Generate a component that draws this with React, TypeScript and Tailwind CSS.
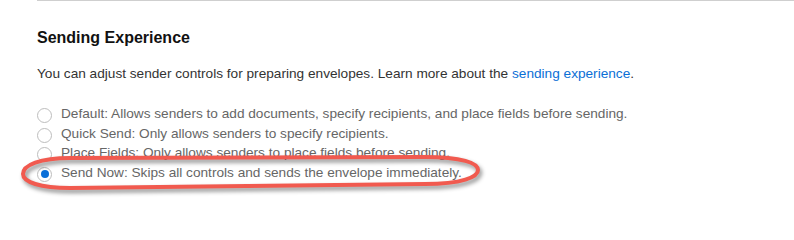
const options = [
  { id: "default", label: "Default: Allows senders to add documents, specify recipients, and place fields before sending." },
  { id: "quick", label: "Quick Send: Only allows senders to specify recipients." },
  { id: "place", label: "Place Fields: Only allows senders to place fields before sending." },
  { id: "now", label: "Send Now: Skips all controls and sends the envelope immediately." },
];

function Radio({ checked }: { checked: boolean }) {
  return (
    <span className="flex h-[15px] w-[15px] shrink-0 items-center justify-center rounded-full border border-[#bdbdbd] bg-white">
      {checked && <span className="h-[8px] w-[8px] rounded-full bg-[#0a6fd8]" />}
    </span>
  );
}

export default function App() {
  const selected = "now";

  return (
    <div className="relative h-[206px] w-[794px] overflow-hidden bg-white font-['Liberation_Sans',Arial,sans-serif]">
      <div className="ml-[37px] border-t border-[#cfcfcf] pt-[27px]">
        <h2 className="text-[16px] font-bold leading-[20px] text-[#111]">Sending Experience</h2>
        <p className="mt-[16px] text-[13.65px] leading-[20px] text-[#333]">
          You can adjust sender controls for preparing envelopes. Learn more about the{" "}
          <a className="text-[#0b6fd6]">sending experience</a>.
        </p>
        <div className="mt-[20px] flex flex-col">
          {options.map((o) => (
            <label key={o.id} className="flex h-[19.7px] items-center gap-[9px]">
              <span className="mt-[3px]">
                <Radio checked={o.id === selected} />
              </span>
              <span className="text-[13.65px] leading-[20px] text-[#666]">{o.label}</span>
            </label>
          ))}
        </div>
      </div>

      <svg
        className="pointer-events-none absolute left-0 top-0 drop-shadow-[2px_3px_2px_rgba(0,0,0,0.45)]"
        width="794"
        height="206"
        viewBox="0 0 794 206"
      >
        <path
          d="M 70 158 L 425 157 C 462 157 478 163 478 170 C 478 177 462 184 425 184 L 70 188 C 40 188 23 182 23 174 C 23 165 40 158 70 158 Z"
          fill="none"
          stroke="#f15a4f"
          strokeWidth="4"
        />
      </svg>
    </div>
  );
}
